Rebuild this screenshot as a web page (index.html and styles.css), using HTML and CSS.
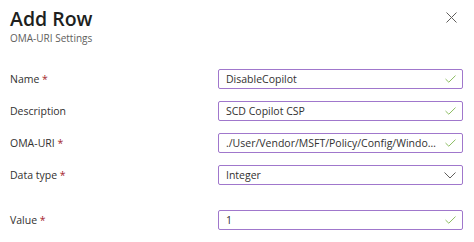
FILE: index.html
```html
<!DOCTYPE html>
<html lang="en">

<head>
    <meta charset="UTF-8">
    <title>Add Row</title>
    <link rel="stylesheet" href="styles.css">
</head>

<body>
    <div class="header">
        <div>
            <h1>Add Row</h1>
            <div class="subtitle">OMA-URI Settings</div>
        </div>
        <span class="close-btn">
            <svg width="11" height="11" viewBox="0 0 11 11"><path d="M0.5 0.5 L10.5 10.5 M10.5 0.5 L0.5 10.5" stroke="#605e5c" stroke-width="1"/></svg>
        </span>
    </div>

    <div class="form">
        <div class="row">
            <label>Name <span class="req">*</span></label>
            <div class="field">
                <span class="value">DisableCopilot</span>
                <svg class="icon" width="11" height="8" viewBox="0 0 11 8"><path d="M0.5 4 L3.8 7.2 L10.5 0.6" fill="none" stroke="#8cbd62" stroke-width="1"/></svg>
            </div>
        </div>
        <div class="row">
            <label>Description</label>
            <div class="field">
                <span class="value">SCD Copilot CSP</span>
                <svg class="icon" width="11" height="8" viewBox="0 0 11 8"><path d="M0.5 4 L3.8 7.2 L10.5 0.6" fill="none" stroke="#8cbd62" stroke-width="1"/></svg>
            </div>
        </div>
        <div class="row">
            <label>OMA-URI <span class="req">*</span></label>
            <div class="field">
                <span class="value">./User/Vendor/MSFT/Policy/Config/WindowsAI/TurnOffWindowsCopilot</span>
                <svg class="icon" width="11" height="8" viewBox="0 0 11 8"><path d="M0.5 4 L3.8 7.2 L10.5 0.6" fill="none" stroke="#8cbd62" stroke-width="1"/></svg>
            </div>
        </div>
        <div class="row">
            <label>Data type <span class="req">*</span></label>
            <div class="field">
                <span class="value">Integer</span>
                <svg class="icon" width="12" height="7" viewBox="0 0 12 7"><path d="M0.5 0.5 L6 6 L11.5 0.5" fill="none" stroke="#605e5c" stroke-width="1"/></svg>
            </div>
        </div>
        <div class="row row-gap">
            <label>Value <span class="req">*</span></label>
            <div class="field">
                <span class="value">1</span>
                <svg class="icon" width="11" height="8" viewBox="0 0 11 8"><path d="M0.5 4 L3.8 7.2 L10.5 0.6" fill="none" stroke="#8cbd62" stroke-width="1"/></svg>
            </div>
        </div>
    </div>
</body>

</html>
```

FILE: styles.css
```css
body {
    font-family: "Open Sans", Arial, sans-serif;
    margin: 0;
    padding: 0;
    background-color: #fff;
    color: #323130;
}

.header {
    display: flex;
    justify-content: space-between;
    align-items: flex-start;
    padding: 6px 17px 0 10px;
}

.header h1 {
    margin: 0;
    font-size: 19.5px;
    font-weight: 600;
    line-height: 26px;
    color: #201f1e;
}

.subtitle {
    font-size: 10px;
    line-height: 12px;
    color: #605e5c;
}

.close-btn {
    margin-top: 6px;
    display: flex;
}

.form {
    display: flex;
    flex-direction: column;
    gap: 12px;
    padding: 25px 11px 0 10px;
}

.row {
    display: flex;
    align-items: center;
    height: 20px;
}

.row-gap {
    margin-top: 13px;
}

.row label {
    width: 208px;
    flex-shrink: 0;
    font-size: 10.5px;
}

.req {
    color: #a4262c;
}

.field {
    flex: 1;
    min-width: 0;
    display: flex;
    align-items: center;
    height: 18px;
    border: 1px solid #a077cc;
    border-radius: 2px;
    padding: 0 6px 0 7px;
    font-size: 10.5px;
    gap: 2px;
}

.field .value {
    flex: 1;
    min-width: 0;
    white-space: nowrap;
    overflow: hidden;
    text-overflow: ellipsis;
}

.field .icon {
    flex-shrink: 0;
}
```
